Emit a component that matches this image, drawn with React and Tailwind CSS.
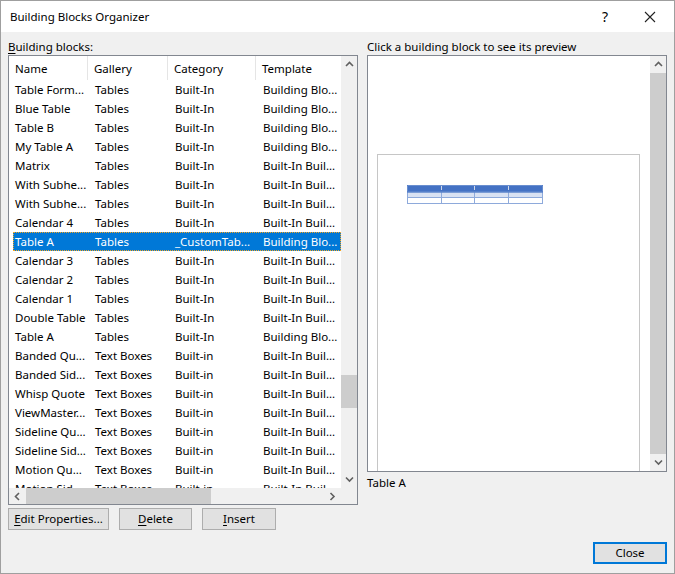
const rows = [
  ['Table Form...', 'Tables', 'Built-In', 'Building Blo...'],
  ['Blue Table', 'Tables', 'Built-In', 'Building Blo...'],
  ['Table B', 'Tables', 'Built-In', 'Building Blo...'],
  ['My Table A', 'Tables', 'Built-In', 'Building Blo...'],
  ['Matrix', 'Tables', 'Built-In', 'Built-In Buil...'],
  ['With Subhe...', 'Tables', 'Built-In', 'Built-In Buil...'],
  ['With Subhe...', 'Tables', 'Built-In', 'Built-In Buil...'],
  ['Calendar 4', 'Tables', 'Built-In', 'Built-In Buil...'],
  ['Table A', 'Tables', '_CustomTab...', 'Building Blo...'],
  ['Calendar 3', 'Tables', 'Built-In', 'Built-In Buil...'],
  ['Calendar 2', 'Tables', 'Built-In', 'Built-In Buil...'],
  ['Calendar 1', 'Tables', 'Built-In', 'Built-In Buil...'],
  ['Double Table', 'Tables', 'Built-In', 'Built-In Buil...'],
  ['Table A', 'Tables', 'Built-In', 'Building Blo...'],
  ['Banded Qu...', 'Text Boxes', 'Built-in', 'Built-In Buil...'],
  ['Banded Sid...', 'Text Boxes', 'Built-in', 'Built-In Buil...'],
  ['Whisp Quote', 'Text Boxes', 'Built-in', 'Built-In Buil...'],
  ['ViewMaster...', 'Text Boxes', 'Built-in', 'Built-In Buil...'],
  ['Sideline Qu...', 'Text Boxes', 'Built-in', 'Built-In Buil...'],
  ['Sideline Sid...', 'Text Boxes', 'Built-in', 'Built-In Buil...'],
  ['Motion Qu...', 'Text Boxes', 'Built-in', 'Built-In Buil...'],
  ['Motion Sid...', 'Text Boxes', 'Built-in', 'Built-In Buil...'],
];

const SELECTED = 8;

function Chevron({ dir }) {
  const pts = {
    up: '1,5 4.5,1.5 8,5',
    down: '1,1.5 4.5,5 8,1.5',
    left: '5,1 1.5,4.5 5,8',
    right: '1.5,1 5,4.5 1.5,8',
  }[dir];
  const vertical = dir === 'up' || dir === 'down';
  return (
    <svg width={vertical ? 9 : 7} height={vertical ? 7 : 9} viewBox={vertical ? '0 0 9 7' : '0 0 7 9'}>
      <polyline points={pts} fill="none" stroke="#606060" strokeWidth="1.6" />
    </svg>
  );
}

function Btn({ w, children, primary }) {
  return (
    <button
      type="button"
      className={
        'flex h-[22px] items-center justify-center bg-[#e1e1e1] text-[11.5px] text-black ' +
        w +
        (primary ? ' border-2 border-[#0078d7]' : ' border border-[#adadad]')
      }
    >
      {children}
    </button>
  );
}

function VScroll({ thumbTop, thumbH, grow }) {
  return (
    <div className="flex w-[16px] flex-col bg-[#f0f0f0]">
      <div className="flex h-[17px] items-center justify-center">
        <Chevron dir="up" />
      </div>
      {grow ? (
        <div className="flex-1 bg-[#cdcdcd]" />
      ) : (
        <div className="relative flex-1">
          <div className="absolute left-0 right-0 bg-[#cdcdcd]" style={{ top: thumbTop, height: thumbH }} />
        </div>
      )}
      <div className="flex h-[17px] items-center justify-center">
        <Chevron dir="down" />
      </div>
    </div>
  );
}

function PreviewTable() {
  return (
    <svg width="136" height="19" viewBox="0 0 136 19">
      <rect x="0" y="0" width="136" height="7" fill="#4472c4" />
      <rect x="0.5" y="7" width="135" height="5.5" fill="#d9e2f3" />
      <rect x="0.5" y="12.5" width="135" height="6" fill="#ffffff" />
      <rect x="0.5" y="0.5" width="135" height="18" fill="none" stroke="#8eaadb" strokeWidth="1" />
      <line x1="0" y1="7" x2="136" y2="7" stroke="#8eaadb" strokeWidth="1" />
      <line x1="0" y1="12.5" x2="136" y2="12.5" stroke="#8eaadb" strokeWidth="1" />
      {[34.5, 67.5, 101.5].map((x) => (
        <g key={x}>
          <line x1={x} y1="7" x2={x} y2="19" stroke="#8eaadb" strokeWidth="1" />
          <line x1={x} y1="1" x2={x} y2="5" stroke="#d0d8e8" strokeWidth="1" />
        </g>
      ))}
      <rect x="0" y="0" width="136" height="7" fill="none" stroke="#4472c4" strokeWidth="1" />
    </svg>
  );
}

export default function App() {
  return (
    <div className="flex h-[574px] w-[675px] flex-col overflow-hidden border border-[#9f9f9f] bg-[#f0f0f0] font-['Noto_Sans','Open_Sans',sans-serif] text-[11.5px] text-black">
      {/* title bar */}
      <div className="flex h-[31px] shrink-0 items-center bg-white pl-[9px]">
        <span className="flex-1 text-[11.5px]">Building Blocks Organizer</span>
        <span className="mr-[36px] text-[14px]">?</span>
        <svg className="mr-[18px]" width="12" height="12" viewBox="0 0 12 12">
          <path d="M1 1 L11 11 M11 1 L1 11" stroke="#222" strokeWidth="1.1" />
        </svg>
      </div>

      {/* body */}
      <div className="flex gap-[9px] pl-[7px] pt-[7px]">
        {/* left column */}
        <div className="flex w-[350px] flex-col">
          <div className="h-[16px] leading-[16px]">
            <span className="underline underline-offset-2">B</span>uilding blocks:
          </div>
          <div className="flex h-[450px] flex-col border border-[#828790] bg-white">
            <div className="flex h-[432px]">
              <div className="w-[332px] overflow-hidden">
                <div className="flex h-[24px] items-center">
                  <div className="h-full w-[79px] border-r border-[#e5e5e5] pl-[6px] leading-[25px]">Name</div>
                  <div className="h-full w-[80px] border-r border-[#e5e5e5] pl-[6px] leading-[25px]">Gallery</div>
                  <div className="h-full w-[88px] border-r border-[#e5e5e5] pl-[6px] leading-[25px]">Category</div>
                  <div className="h-full w-[85px] pl-[6px] leading-[25px]">Template</div>
                </div>
                {rows.map((r, i) => {
                  const sel = i === SELECTED;
                  return (
                    <div
                      key={i}
                      className={
                        'ml-[4px] flex h-[19px] w-[328px] items-center whitespace-nowrap leading-[19px] ' +
                        (sel ? 'bg-[#0078d7] text-white outline outline-1 -outline-offset-1 outline-dotted outline-[#f5a623]' : '')
                      }
                    >
                      <div className="w-[75px] overflow-hidden pl-[2px]">{r[0]}</div>
                      <div className="w-[80px] overflow-hidden pl-[7px]">{r[1]}</div>
                      <div className="w-[88px] overflow-hidden pl-[7px]">{r[2]}</div>
                      <div className="w-[85px] overflow-hidden pl-[7px]">{r[3]}</div>
                    </div>
                  );
                })}
              </div>
              <VScroll thumbTop={302} thumbH={33} />
            </div>
            <div className="flex h-[16px] bg-[#f0f0f0]">
              <div className="flex w-[17px] items-center justify-center">
                <Chevron dir="left" />
              </div>
              <div className="w-[185px] bg-[#cdcdcd]" />
              <div className="flex-1" />
              <div className="flex w-[17px] items-center justify-center">
                <Chevron dir="right" />
              </div>
              <div className="w-[16px]" />
            </div>
          </div>
          <div className="mt-[3px] flex gap-[10px]">
            <Btn w="w-[101px]">
              <span>
                <span className="underline underline-offset-2">E</span>dit Properties...
              </span>
            </Btn>
            <Btn w="w-[73px]">
              <span>
                <span className="underline underline-offset-2">D</span>elete
              </span>
            </Btn>
            <Btn w="w-[74px]">
              <span>
                <span className="underline underline-offset-2">I</span>nsert
              </span>
            </Btn>
          </div>
        </div>

        {/* right column */}
        <div className="flex w-[300px] flex-col">
          <div className="h-[16px] leading-[16px]">Click a building block to see its preview</div>
          <div className="flex h-[417px] border border-[#828790] bg-white">
            <div className="flex-1 overflow-hidden pl-[9px] pr-[10px] pt-[98px]">
              <div className="h-[400px] border-l border-r border-t border-[#c6c6c6] pl-[29px] pt-[30px]">
                <PreviewTable />
              </div>
            </div>
            <VScroll grow />
          </div>
          <div className="mt-[3px] h-[16px] leading-[16px]">Table A</div>
        </div>
      </div>

      {/* footer */}
      <div className="flex justify-end pr-[7px] pt-[12px]">
        <Btn w="w-[74px]" primary>
          Close
        </Btn>
      </div>
    </div>
  );
}
